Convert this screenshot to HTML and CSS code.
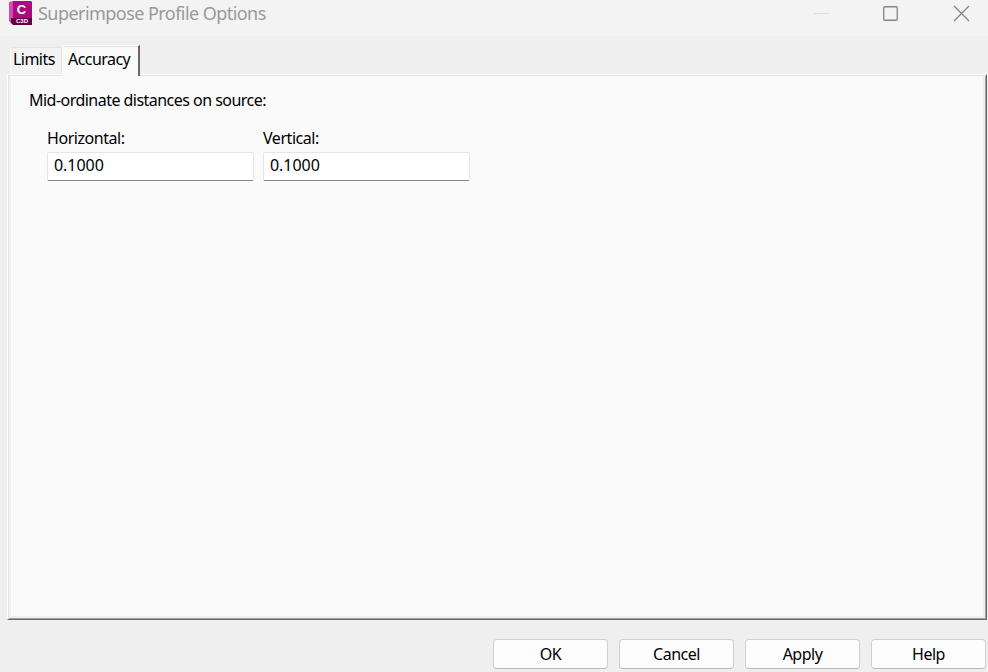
FILE: index.html
```
<!DOCTYPE html>
<html lang="en-US"><head>
<meta charset="utf-8">
<meta name="viewport" content="width=device-width, initial-scale=1.0">
<title>Superimpose Profile Options</title>
<link rel="stylesheet" href="styles.css">
</head><body>

<div class="dialog">
<div class="title-bar">
	<div class="app-icon">
		<svg width="24" height="25" viewBox="0 0 24 25">
			<path d="M0 2L4 1V18H0Z" fill="#d64cae"/>
			<path d="M4 1H22L23 2V18H4Z" fill="#a90b7c"/>
			<path d="M2 18H23V25H4L2 23Z" fill="#650045"/>
			<path d="M0 18H2V23L0 21Z" fill="#d64cae"/>
		</svg>
		<span class="letter">C</span>
		<span class="product">C3D</span>
	</div>
	<span class="title">Superimpose Profile Options</span>
	<svg class="window-buttons" width="160" height="28" viewBox="0 0 160 28" fill="none">
		<path d="M0 13.5H15" stroke="#dedede"/>
		<rect x="69.75" y="6.75" width="13.5" height="13.5" rx="1" stroke="#858585" stroke-width="1.3"/>
		<path d="M140 6L155 21M155 6L140 21" stroke="#858585" stroke-width="1.3"/>
	</svg>
</div>

<div class="tabs">
	<div class="tab">Limits</div>
	<div class="tab active">Accuracy</div>
</div>

<div class="panel">
	<div class="heading">Mid-ordinate distances on source:</div>
	<div class="fields">
		<label class="field">Horizontal:<input type="text" value="0.1000"></label>
		<label class="field">Vertical:<input type="text" value="0.1000"></label>
	</div>
</div>

<div class="buttons">
	<button>OK</button>
	<button>Cancel</button>
	<button>Apply</button>
	<button>Help</button>
</div>
</div>

</body></html>
```
FILE: styles.css
```
* {
	box-sizing : border-box ;
	}
body {
	margin : 0 ;
	background : #efefef ;
	color : #000 ;
	font : 16px/20px "Noto Sans", sans-serif ;
	letter-spacing : -0.45px ;
	overflow : hidden ;
	}
.dialog {
	width : 988px ;
	height : 672px ;
	display : flex ;
	flex-direction : column ;
	}
.title-bar {
	height : 36px ;
	flex : none ;
	display : flex ;
	align-items : flex-start ;
	padding-left : 9px ;
	background : #f3f3f3 ;
	}
.app-icon {
	position : relative ;
	width : 24px ;
	height : 25px ;
	margin-right : 5px ;
	color : #fff ;
	font-family : "Liberation Sans", sans-serif ;
	font-weight : bold ;
	letter-spacing : 0 ;
	}
.app-icon svg {
	display : block ;
	}
.app-icon span {
	position : absolute ;
	text-align : center ;
	}
.app-icon .letter {
	left : 3px ;
	top : 2px ;
	width : 19px ;
	font-size : 13px ;
	line-height : 15px ;
	}
.app-icon .product {
	left : 3px ;
	top : 18px ;
	width : 20px ;
	font-size : 6px ;
	line-height : 6px ;
	}
.title {
	padding-top : 2px ;
	color : #999 ;
	font-size : 18px ;
	line-height : 22px ;
	letter-spacing : -0.55px ;
	}
.window-buttons {
	margin-left : auto ;
	margin-right : 14px ;
	}
.tabs {
	display : flex ;
	align-items : flex-end ;
	height : 39px ;
	flex : none ;
	padding-left : 10px ;
	}
.tab {
	width : 52px ;
	height : 28px ;
	padding : 1px 0 0 2px ;
	background : #f3f3f3 ;
	border : 1px solid #e3e3e3 ;
	border-left-color : #fff ;
	border-bottom : none ;
	letter-spacing : -0.55px ;
	white-space : nowrap ;
	}
.tab.active {
	position : relative ;
	width : 78px ;
	height : 31px ;
	margin-bottom : -1px ;
	padding : 3px 0 0 5px ;
	background : #fafafa ;
	border-top : 1px solid #fff ;
	border-right : 2px solid #696969 ;
	box-shadow : inset 0 1px #e3e3e3 ;
	}
.panel {
	height : 546px ;
	margin : -1px 1px 0 7px ;
	flex : none ;
	padding : 15px 0 0 20px ;
	background : #fafafa ;
	border : 1px solid #696969 ;
	border-top-color : #fff ;
	border-left-color : #fff ;
	box-shadow : inset 1px 1px #e3e3e3, inset -1px -1px #a0a0a0, inset 3px 0 #f0f0f0, inset -3px -3px #f0f0f0 ;
	}
.heading {
	height : 38px ;
	padding-left : 1px ;
	letter-spacing : -0.53px ;
	}
.fields {
	display : flex ;
	gap : 9px ;
	padding-left : 19px ;
	}
.field {
	display : flex ;
	flex-direction : column ;
	align-items : flex-start ;
	width : 207px ;
	}
.field input {
	width : 100% ;
	height : 29px ;
	margin-top : 4px ;
	padding : 0 6px 4px ;
	background : #fff ;
	border : 1px solid #e6e6e6 ;
	border-bottom-color : #868686 ;
	border-radius : 2px ;
	color : #000 ;
	font : inherit ;
	letter-spacing : -0.05px ;
	}
.buttons {
	display : flex ;
	justify-content : flex-end ;
	gap : 11px ;
	padding : 19px 2px 0 0 ;
	}
.buttons button {
	width : 115px ;
	height : 30px ;
	padding : 0 ;
	background : #fdfdfd ;
	border : 1px solid #d0d0d0 ;
	border-bottom-color : #bababa ;
	border-radius : 4px ;
	color : #000 ;
	font : inherit ;
	letter-spacing : -0.5px ;
	}
```
